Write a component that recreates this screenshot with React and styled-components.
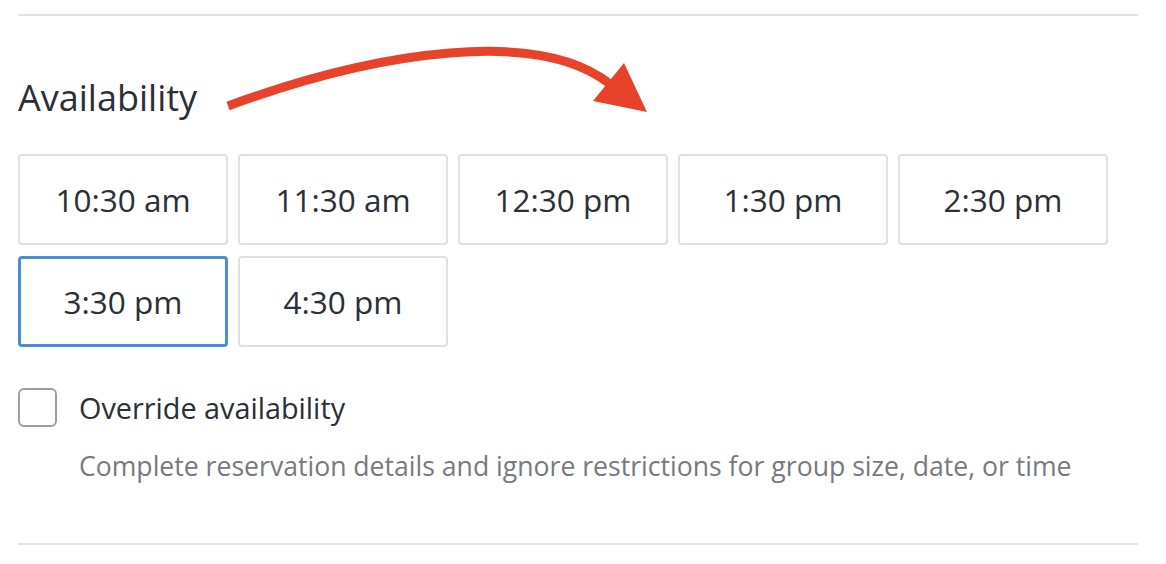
import styled, { createGlobalStyle } from 'styled-components';

const GlobalStyle = createGlobalStyle`
	body {
		margin: 0;
		background: #ffffff;
		font-family: 'Open Sans', 'Lato', sans-serif;
		color: #2b2f36;
	}
`;

const slots = ['10:30 am', '11:30 am', '12:30 pm', '1:30 pm', '2:30 pm', '3:30 pm', '4:30 pm'];

function Arrow() {
	return (
		<ArrowSvg width="1166" height="140" viewBox="0 0 1166 140">
			<path
				d="M228 106 C 380 50, 540 28, 610 84"
				fill="none"
				stroke="#e8432a"
				strokeWidth="9"
			/>
			<polygon points="647,112 624,63 593,101" fill="#e8432a" />
		</ArrowSvg>
	);
}

export default function App() {
	return (
		<Page>
			<GlobalStyle />
			<Arrow />
			<Rule />
			<Heading>Availability</Heading>
			<SlotGrid>
				{slots.map((slot) => (
					<Slot key={slot} selected={slot === '3:30 pm'}>
						{slot}
					</Slot>
				))}
			</SlotGrid>
			<CheckRow>
				<Box />
				<CheckLabel>Override availability</CheckLabel>
			</CheckRow>
			<Hint>Complete reservation details and ignore restrictions for group size, date, or time</Hint>
			<Rule bottom />
		</Page>
	);
}

const Page = styled.div`
	position: relative;
	width: 1120px;
	padding: 14px 0 0 18px;
`;

const ArrowSvg = styled.svg`
	position: absolute;
	left: 0;
	top: 0;
	pointer-events: none;
`;

const Rule = styled.div`
	height: 2px;
	background: #e3e3e3;
	margin-top: ${(p) => (p.bottom ? '61px' : '0')};
`;

const Heading = styled.h2`
	margin: 62px 0 0;
	font-size: 36px;
	font-weight: 400;
	line-height: 40px;
	color: #2b2f36;
`;

const SlotGrid = styled.div`
	display: grid;
	grid-template-columns: repeat(5, 210px);
	column-gap: 10px;
	row-gap: 11px;
	margin-top: 36px;
`;

const Slot = styled.button`
	box-sizing: border-box;
	height: 91px;
	background: #ffffff;
	border: ${(p) => (p.selected ? '3px solid #4a8fd5' : '2px solid #e0e0e0')};
	border-radius: 4px;
	font-family: inherit;
	font-size: 31.5px;
	color: #2b2f36;
	cursor: pointer;
`;

const CheckRow = styled.label`
	display: flex;
	align-items: center;
	gap: 22px;
	margin-top: 41px;
`;

const Box = styled.span`
	box-sizing: border-box;
	width: 39px;
	height: 39px;
	border: 2px solid #9b9ea3;
	border-radius: 6px;
`;

const CheckLabel = styled.span`
	font-size: 28.8px;
	color: #2b2f36;
`;

const Hint = styled.p`
	margin: 23px 0 0 61px;
	font-size: 26.6px;
	line-height: 32px;
	color: #777a80;
`;
